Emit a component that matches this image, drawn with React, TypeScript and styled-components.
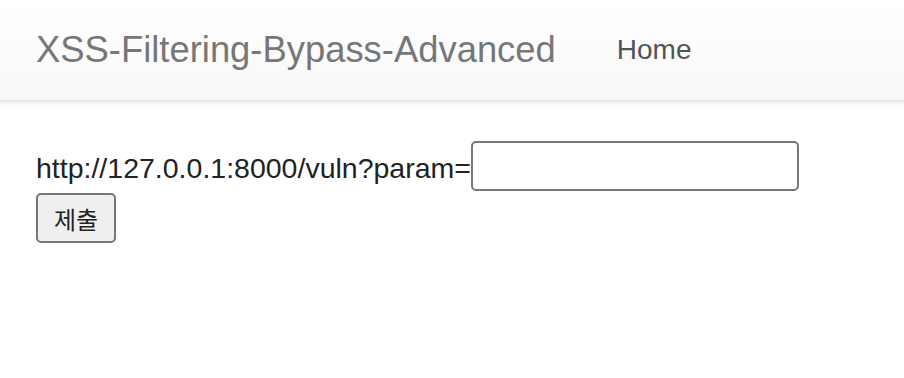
import styled, {createGlobalStyle} from 'styled-components'

const GlobalStyle = createGlobalStyle`
    body {
        margin: 0;
        background: #fff;
        font-family: 'Liberation Sans', Arial, sans-serif;
        color: #333;
    }
`

const App = () => {
    return (
        <>
            <GlobalStyle />
            <Navbar>
                <Brand>XSS-Filtering-Bypass-Advanced</Brand>
                <NavLink>Home</NavLink>
            </Navbar>
            <Content>
                <Form onSubmit={(e) => e.preventDefault()}>
                    <Row>
                        <Label>http://127.0.0.1:8000/vuln?param=</Label>
                        <Input type="text" />
                    </Row>
                    <SubmitButton type="submit">제출</SubmitButton>
                </Form>
            </Content>
        </>
    )
}

export default App

const Navbar = styled.div`
    display: flex;
    align-items: center;
    height: 100px;
    padding: 0 36px;
    background-image: linear-gradient(to bottom, #fff 0%, #f8f8f8 100%);
    border-bottom: 2px solid #e7e7e7;
    box-shadow: 0 2px 6px rgba(0, 0, 0, 0.06);
`

const Brand = styled.a`
    font-size: 36.4px;
    color: #777;
    margin-right: 61px;
`

const NavLink = styled.a`
    font-size: 28px;
    color: #555;
`

const Content = styled.div`
    padding: 39px 36px 0;
`

const Form = styled.form`
    display: flex;
    flex-direction: column;
    align-items: flex-start;
    gap: 2px;
`

const Row = styled.div`
    display: flex;
    align-items: center;
`

const Label = styled.span`
    font-size: 28.5px;
    color: #222;
    padding-top: 4px;
`

const Input = styled.input`
    box-sizing: border-box;
    width: 328px;
    height: 50px;
    border: 2px solid #767676;
    border-radius: 5px;
    padding: 2px 4px;
    font-size: 26px;
    background: #fff;
`

const SubmitButton = styled.button`
    box-sizing: border-box;
    width: 80px;
    height: 50px;
    font-size: 24px;
    font-family: 'Liberation Sans', 'Noto Sans CJK KR', sans-serif;
    color: #222;
    background: #efefef;
    border: 2px solid #767676;
    border-radius: 5px;
    padding: 0;
`
